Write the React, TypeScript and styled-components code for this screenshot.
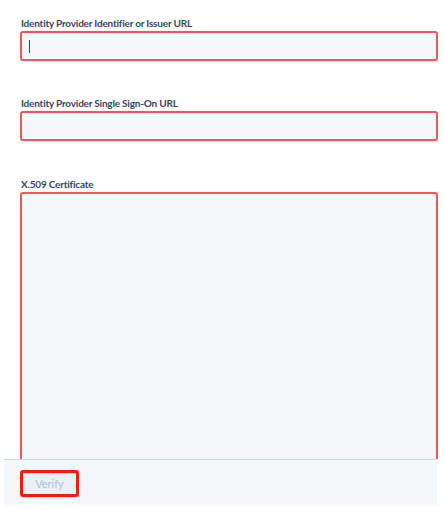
import React from 'react';
import styled, { createGlobalStyle } from 'styled-components';

const GlobalStyle = createGlobalStyle`
  html, body {
    margin: 0;
    padding: 0;
    background: #ffffff;
  }
  body {
    font-family: Lato, "Open Sans", "Liberation Sans", sans-serif;
    color: #33475b;
  }
`;

const Page = styled.div`
  width: 444px;
  height: 509px;
  display: flex;
  flex-direction: column;
  background: #ffffff;
`;

const FormArea = styled.div`
  height: 459px;
  overflow: hidden;
  padding: 16px 6px 0 20px;
  box-sizing: border-box;
  display: flex;
  flex-direction: column;
`;

const Field = styled.div<{ gap: number }>`
  display: flex;
  flex-direction: column;
  margin-bottom: ${p => p.gap}px;
`;

const Label = styled.label`
  font-size: 10px;
  font-weight: 700;
  letter-spacing: -0.2px;
  line-height: 14px;
  color: #33475b;
  margin-bottom: 1px;
  padding-left: 1px;
`;

const TextInput = styled.div`
  box-sizing: border-box;
  width: 418px;
  height: 30px;
  background: #f5f8fa;
  border: 2px solid #f2545b;
  border-radius: 3px;
  display: flex;
  align-items: center;
  padding-left: 7px;
`;

const Caret = styled.span`
  display: block;
  width: 1px;
  height: 13px;
  background: #33475b;
`;

const TextArea = styled.div`
  box-sizing: border-box;
  width: 418px;
  height: 320px;
  background: #f5f8fa;
  border: 2px solid #f2545b;
  border-radius: 3px;
  flex-shrink: 0;
`;

const Footer = styled.div`
  box-sizing: border-box;
  margin-left: 4px;
  width: 433px;
  height: 46px;
  background: #f5f8fa;
  border-top: 1px solid #cbd6e2;
  display: flex;
  align-items: center;
  padding-left: 16px;
`;

const VerifyButton = styled.button`
  box-sizing: border-box;
  width: 59px;
  height: 27px;
  margin-top: 1px;
  background: #eaf0f6;
  border: 3px solid #f31b0f;
  border-radius: 3px;
  color: #b0c1d4;
  font-family: Lato, "Open Sans", "Liberation Sans", sans-serif;
  font-size: 11px;
  padding: 0;
  cursor: not-allowed;
`;

export default function App() {
  return (
    <>
      <GlobalStyle />
      <Page>
        <FormArea>
          <Field gap={35}>
            <Label>Identity Provider Identifier or Issuer URL</Label>
            <TextInput>
              <Caret />
            </TextInput>
          </Field>
          <Field gap={36}>
            <Label>Identity Provider Single Sign-On URL</Label>
            <TextInput />
          </Field>
          <Field gap={0}>
            <Label>X.509 Certificate</Label>
            <TextArea />
          </Field>
        </FormArea>
        <Footer>
          <VerifyButton disabled>Verify</VerifyButton>
        </Footer>
      </Page>
    </>
  );
}
